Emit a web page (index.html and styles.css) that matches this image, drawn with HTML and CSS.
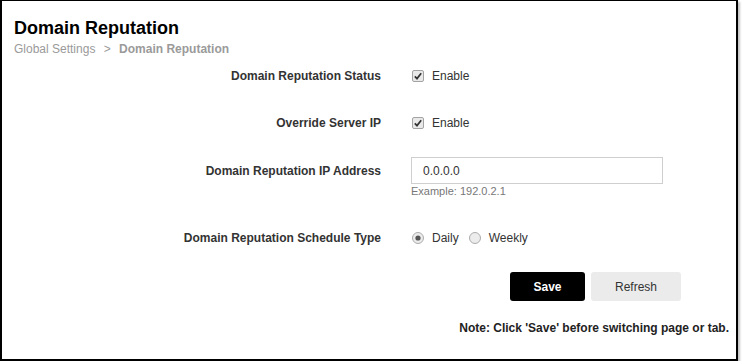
FILE: index.html
```html
<!DOCTYPE html>
<html>
<head>
  <title>Domain Reputation</title>
  <link rel="stylesheet" href="styles.css">
</head>
<body>
  <div class="panel">
    <h1 class="page-title">Domain Reputation</h1>
    <div class="breadcrumb">
      <span>Global Settings</span>
      <span class="sep">&gt;</span>
      <span class="current">Domain Reputation</span>
    </div>

    <div class="form-row row-status">
      <div class="label">Domain Reputation Status</div>
      <div class="control">
        <svg class="check" width="12" height="12" viewBox="0 0 12 12">
          <rect x="0.5" y="0.5" width="11" height="11" rx="1.5" fill="#e9e9e9" stroke="#a3a3a3"/>
          <path d="M2.8 6.3 L5 8.6 L9.2 3.3" fill="none" stroke="#333" stroke-width="1.7"/>
        </svg>
        <span>Enable</span>
      </div>
    </div>

    <div class="form-row row-override">
      <div class="label">Override Server IP</div>
      <div class="control">
        <svg class="check" width="12" height="12" viewBox="0 0 12 12">
          <rect x="0.5" y="0.5" width="11" height="11" rx="1.5" fill="#e9e9e9" stroke="#a3a3a3"/>
          <path d="M2.8 6.3 L5 8.6 L9.2 3.3" fill="none" stroke="#333" stroke-width="1.7"/>
        </svg>
        <span>Enable</span>
      </div>
    </div>

    <div class="form-row row-ip">
      <div class="label">Domain Reputation IP Address</div>
      <div class="control">
        <input class="text-input" type="text" value="0.0.0.0">
      </div>
    </div>
    <div class="hint">Example: 192.0.2.1</div>

    <div class="form-row row-schedule">
      <div class="label">Domain Reputation Schedule Type</div>
      <div class="control">
        <svg class="radio" width="12" height="12" viewBox="0 0 12 12">
          <circle cx="6" cy="6" r="5.5" fill="#ececec" stroke="#ababab"/>
          <circle cx="6" cy="6" r="2.6" fill="#555"/>
        </svg>
        <span class="radio-text">Daily</span>
        <svg class="radio" width="12" height="12" viewBox="0 0 12 12">
          <circle cx="6" cy="6" r="5.5" fill="#ececec" stroke="#ababab"/>
        </svg>
        <span>Weekly</span>
      </div>
    </div>

    <div class="actions">
      <button class="btn btn-save">Save</button>
      <button class="btn btn-refresh">Refresh</button>
    </div>

    <div class="note">Note: Click 'Save' before switching page or tab.</div>
  </div>
</body>
</html>
```

FILE: styles.css
```css
body {
  margin: 0;
  padding: 0;
  font-family: "Liberation Sans", Arial, sans-serif;
  font-size: 12px;
  color: #333;
  background: #fff;
}

.panel {
  width: 715px;
  height: 342px;
  border: 2px solid #000;
  border-top-width: 1px;
  padding: 16px 7px 0 12px;
  box-shadow: 2px 2px 2px #c4c4c4;
}

.page-title {
  margin: 0;
  font-size: 18px;
  line-height: 22px;
  font-weight: bold;
  color: #000;
}

.breadcrumb {
  margin-top: 3px;
  line-height: 14px;
  color: #9a9a9a;
}

.breadcrumb .sep {
  margin: 0 5px;
}

.breadcrumb .current {
  font-weight: bold;
}

.form-row {
  display: grid;
  grid-template-columns: 367px 1fr;
  column-gap: 30px;
  align-items: center;
  min-height: 24px;
}

.label {
  text-align: right;
  font-weight: bold;
  color: #333;
}

.control {
  display: flex;
  align-items: center;
  padding-left: 1px;
}

.check,
.radio {
  flex: none;
  margin-right: 8px;
}

.radio-text {
  margin-right: 10px;
}

.row-status {
  margin-top: 8px;
}

.row-override {
  margin-top: 23px;
}

.row-ip {
  margin-top: 22px;
}

.text-input {
  width: 252px;
  height: 27px;
  box-sizing: border-box;
  margin: 0 0 0 -1px;
  padding: 0 11px;
  border: 1px solid #cfcfcf;
  font-family: "Liberation Sans", Arial, sans-serif;
  font-size: 12px;
  color: #333;
  outline: none;
}

.hint {
  margin: 1px 0 0 397px;
  line-height: 13px;
  font-size: 11px;
  color: #777;
}

.row-schedule {
  margin-top: 28px;
}

.actions {
  display: flex;
  justify-content: flex-end;
  gap: 6px;
  margin: 22px 48px 0 0;
}

.btn {
  height: 29px;
  border: none;
  border-radius: 3px;
  font-family: "Liberation Sans", Arial, sans-serif;
  font-size: 12px;
  cursor: pointer;
}

.btn-save {
  width: 75px;
  background: #000;
  color: #fff;
  font-weight: bold;
}

.btn-refresh {
  width: 90px;
  background: #ebebeb;
  color: #333;
}

.note {
  margin-top: 20px;
  line-height: 14px;
  text-align: right;
  font-weight: bold;
  color: #222;
}
```
